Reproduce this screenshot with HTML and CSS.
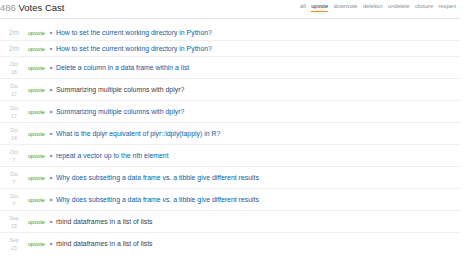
FILE: index.html
```html
<!DOCTYPE html>
<html lang="en">
<head>
    <meta charset="UTF-8">
    <title>Votes Cast</title>
    <link rel="stylesheet" href="styles.css">
</head>
<body>
    <div class="header">
        <h2 class="title"><span class="count">486</span> Votes Cast</h2>
        <div class="tabs">
            <a>all</a>
            <a class="active">upvote</a>
            <a>downvote</a>
            <a>deletion</a>
            <a>undelete</a>
            <a>closure</a>
            <a>reopen</a>
        </div>
    </div>

    <div class="votes">
        <div class="row first">
            <div class="date">2m</div>
            <div class="type">upvote</div>
            <div class="post"><span class="arrow">&#9654;</span><a class="link">How to set the current working directory in Python?</a></div>
        </div>
        <div class="row">
            <div class="date">2m</div>
            <div class="type">upvote</div>
            <div class="post"><span class="arrow">&#9654;</span><a class="link">How to set the current working directory in Python?</a></div>
        </div>
        <div class="row tall">
            <div class="date small">Oct<br>18</div>
            <div class="type">upvote</div>
            <div class="post"><span class="arrow">&#9654;</span><a class="link">Delete a column in a data frame within a list</a></div>
        </div>
        <div class="row tall">
            <div class="date small">Oct<br>17</div>
            <div class="type">upvote</div>
            <div class="post"><span class="arrow">&#9654;</span><a class="link seen">Summarizing multiple columns with dplyr?</a></div>
        </div>
        <div class="row tall">
            <div class="date small">Oct<br>17</div>
            <div class="type">upvote</div>
            <div class="post"><span class="arrow">&#9654;</span><a class="link">Summarizing multiple columns with dplyr?</a></div>
        </div>
        <div class="row tall">
            <div class="date small">Oct<br>14</div>
            <div class="type">upvote</div>
            <div class="post"><span class="arrow">&#9654;</span><a class="link">What is the dplyr equivalent of plyr::ldply(tapply) in R?</a></div>
        </div>
        <div class="row tall">
            <div class="date small">Oct<br>7</div>
            <div class="type">upvote</div>
            <div class="post"><span class="arrow">&#9654;</span><a class="link">repeat a vector up to the nth element</a></div>
        </div>
        <div class="row tall">
            <div class="date small">Oct<br>7</div>
            <div class="type">upvote</div>
            <div class="post"><span class="arrow">&#9654;</span><a class="link">Why does subsetting a data frame vs. a tibble give different results</a></div>
        </div>
        <div class="row tall">
            <div class="date small">Oct<br>7</div>
            <div class="type">upvote</div>
            <div class="post"><span class="arrow">&#9654;</span><a class="link">Why does subsetting a data frame vs. a tibble give different results</a></div>
        </div>
        <div class="row tall">
            <div class="date small">Sep<br>23</div>
            <div class="type">upvote</div>
            <div class="post"><span class="arrow">&#9654;</span><a class="link seen">rbind dataframes in a list of lists</a></div>
        </div>
        <div class="row tall">
            <div class="date small">Sep<br>23</div>
            <div class="type">upvote</div>
            <div class="post"><span class="arrow">&#9654;</span><a class="link seen">rbind dataframes in a list of lists</a></div>
        </div>
    </div>
</body>
</html>
```

FILE: styles.css
```css
body { margin: 0; background: #fff; font-family: "Liberation Sans", Arial, sans-serif; color: #333; width: 460px; }

.header { display: flex; justify-content: space-between; align-items: flex-start; height: 18px; border-bottom: 1px solid #e4e6e8; }
.title { margin: 0; padding-top: 2px; font-size: 9.5px; font-weight: normal; color: #242729; line-height: 11px; }
.count { color: #9a9a9a; }
.tabs { display: flex; gap: 5.5px; padding-top: 3px; padding-right: 4px; font-size: 5.6px; line-height: 7px; }
.tabs a { color: #858c93; padding-bottom: 1px; }
.tabs a.active { color: #242729; border-bottom: 1px solid #f48024; }

.votes { padding-top: 6px; }
.row { display: flex; align-items: center; height: 15px; border-top: 1px solid #eff0f1; }
.row.first { border-top: none; height: 15px; }
.row.tall { height: 21px; }
.date { width: 28px; text-align: center; font-size: 7.2px; color: #bbc0c4; line-height: 8px; }
.date.small { font-size: 5px; line-height: 8px; }
.type { width: 22px; font-size: 5.6px; color: #2f9a24; }
.post { display: flex; align-items: center; font-size: 6.9px; white-space: nowrap; }
.arrow { font-size: 4.2px; color: #8a8f94; margin-right: 3px; }
.link { color: #0e5c9e; }
.link.seen { color: #3b4045; }
```
